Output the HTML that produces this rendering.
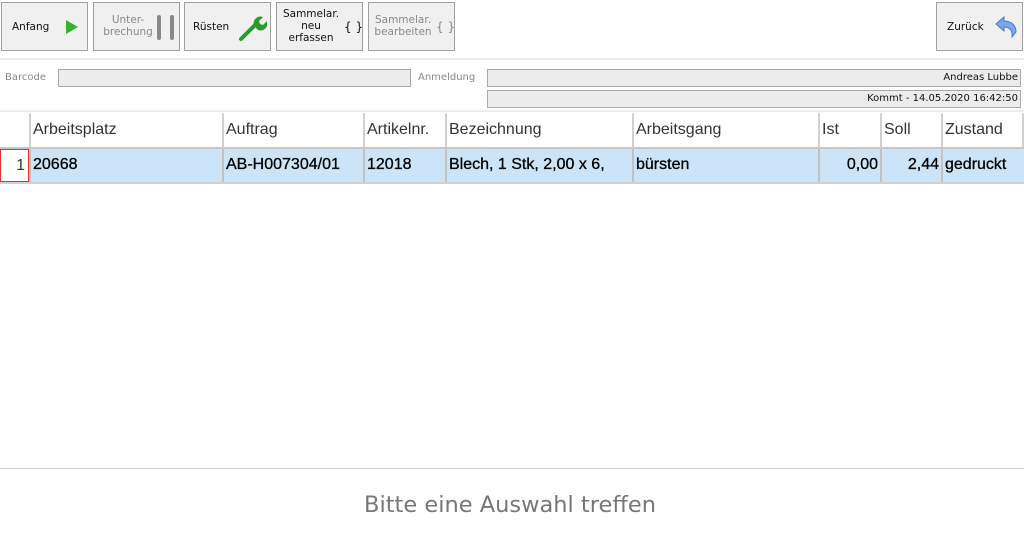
<!DOCTYPE html>
<html><head><style>
body{margin:0;width:1024px;height:545px;background:#fff;font-family:"DejaVu Sans","Liberation Sans",sans-serif;position:relative;overflow:hidden}
.b{position:absolute;top:2px;width:87px;height:49px;background:#f0f0f0;border:1px solid #a0a0a0;box-sizing:border-box;font-size:10.5px;color:#111}
.b .t{position:absolute;text-align:center;line-height:12px;white-space:nowrap}
.dis{color:#888}
.lbl{position:absolute;font-size:10px;color:#888}
.in{position:absolute;background:#ececec;border:1px solid #a9a9a9;box-sizing:border-box;font-size:10px;text-align:right;padding-right:2px;line-height:15px;color:#111}
.c{position:absolute;font-family:"Liberation Sans",sans-serif;font-size:16px;line-height:34px;box-sizing:border-box;padding:0 2px;white-space:nowrap;overflow:hidden}
.h{top:113px;height:34px;color:#333;border-left:2px solid #d0d0d0}
.r{top:149px;height:33px;background:#cce4f7;color:#000;border-left:2px solid #c2c2c2;line-height:32px;font-weight:500;-webkit-text-stroke:0.3px #000}
</style></head><body>
<div class="b" style="left:1px"><div class="t" style="left:10px;top:18px">Anfang</div>
<svg style="position:absolute;left:62px;top:16px" width="16" height="16"><path d="M2 1L14 8L2 15Z" fill="#2fb52f"/></svg></div>
<div class="b dis" style="left:93px"><div class="t" style="left:4px;top:11px;width:60px">Unter-<br>brechung</div>
<div style="position:absolute;left:63px;top:12px;width:4px;height:25px;background:#888;border-radius:2px"></div>
<div style="position:absolute;left:76px;top:12px;width:4px;height:25px;background:#888;border-radius:2px"></div></div>
<div class="b" style="left:184px"><div class="t" style="left:8px;top:18px">Rüsten</div>
<svg style="position:absolute;left:52px;top:10px" width="30" height="30"><path d="M4 26L18 12" stroke="#2a9a2a" stroke-width="4" stroke-linecap="round"/><path d="M17 13a7 7 0 0 1 9-9l-4 4 1 3 3 1 4-4a7 7 0 0 1-9 9Z" fill="#2a9a2a"/></svg></div>
<div class="b" style="left:276px"><div class="t" style="left:3px;top:5px;width:62px">Sammelar.<br>neu<br>erfassen</div><div class="t" style="left:67px;top:18px;font-size:12px">{ }</div></div>
<div class="b dis" style="left:368px"><div class="t" style="left:3px;top:11px;width:62px">Sammelar.<br>bearbeiten</div><div class="t" style="left:67px;top:18px;font-size:12px">{ }</div></div>
<div class="b" style="left:936px"><div class="t" style="left:10px;top:18px">Zurück</div>
<svg style="position:absolute;left:57px;top:13px" width="24" height="22"><path d="M2 8L10 1V5C18 5 22 10 22 16L18 21C19 14 15 11 10 11V15Z" fill="#7aa8e8" stroke="#4a78c8" stroke-width="1"/></svg></div>
<div style="position:absolute;left:0;top:58px;width:1024px;height:2px;background:#ececec"></div>
<div class="lbl" style="left:5px;top:72px">Barcode</div>
<div class="in" style="left:58px;top:69px;width:353px;height:18px"></div>
<div class="lbl" style="left:418px;top:72px">Anmeldung</div>
<div class="in" style="left:487px;top:69px;width:534px;height:18px">Andreas Lubbe</div>
<div class="in" style="left:487px;top:90px;width:534px;height:18px">Kommt - 14.05.2020 16:42:50</div>
<div style="position:absolute;left:0;top:110px;width:1024px;height:2px;background:#ececec"></div>
<div style="position:absolute;left:0;top:147px;width:1024px;height:2px;background:#c8c8c8"></div>
<div style="position:absolute;left:0;top:182px;width:1024px;height:2px;background:#d0d0d0"></div>
<div class="c h" style="left:29px;width:193px">Arbeitsplatz</div>
<div class="c h" style="left:222px;width:141px">Auftrag</div>
<div class="c h" style="left:363px;width:82px">Artikelnr.</div>
<div class="c h" style="left:445px;width:187px">Bezeichnung</div>
<div class="c h" style="left:632px;width:186px">Arbeitsgang</div>
<div class="c h" style="left:818px;width:62px">Ist</div>
<div class="c h" style="left:880px;width:61px">Soll</div>
<div class="c h" style="left:941px;width:83px;border-right:2px solid #d0d0d0">Zustand</div>
<div class="c" style="left:0;top:149px;width:29px;height:33px;border:1px solid #e03030;text-align:right;line-height:31px;padding:0 3px;color:#333">1</div>
<div class="c r" style="left:29px;width:193px">20668</div>
<div class="c r" style="left:222px;width:141px">AB-H007304/01</div>
<div class="c r" style="left:363px;width:82px">12018</div>
<div class="c r" style="left:445px;width:187px">Blech, 1 Stk, 2,00 x 6,</div>
<div class="c r" style="left:632px;width:186px">bürsten</div>
<div class="c r" style="left:818px;width:62px;text-align:right">0,00</div>
<div class="c r" style="left:880px;width:61px;text-align:right">2,44</div>
<div class="c r" style="left:941px;width:83px">gedruckt</div>
<div style="position:absolute;left:0;top:468px;width:1024px;height:1px;background:#d0d0d0"></div>
<div style="position:absolute;left:0;top:492px;width:1020px;text-align:center;font-size:22.5px;color:#777">Bitte eine Auswahl treffen</div>
</body></html>
